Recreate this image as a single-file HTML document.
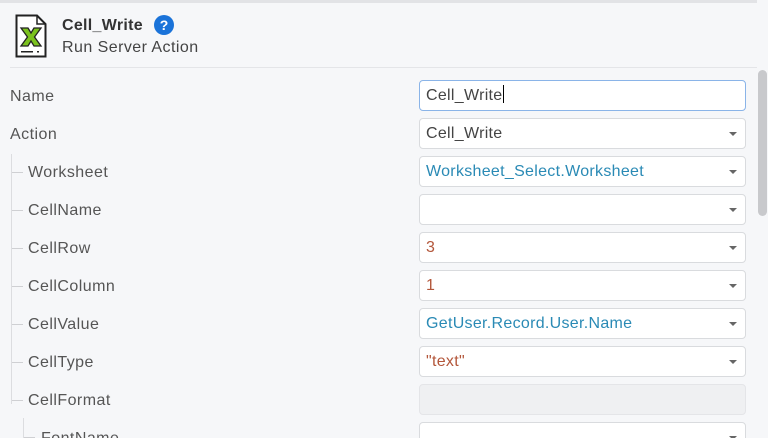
<!DOCTYPE html>
<html><head><style>
*{margin:0;padding:0;box-sizing:border-box}
html,body{width:768px;height:438px;overflow:hidden}
body{background:#f6f7f9;font-family:"Liberation Sans",sans-serif;position:relative;color:#555}
.abs{position:absolute}
.f{position:absolute;left:419px;width:327px;height:31px;background:#fff;border:1px solid #d9dbde;border-radius:4px;font-size:16px;letter-spacing:0.3px;line-height:30px;padding-left:6px;color:#444}
.f .ar{position:absolute;right:8px;top:13px;width:0;height:0;border-left:4px solid transparent;border-right:4px solid transparent;border-top:4px solid #666}
.l{position:absolute;font-size:16px;letter-spacing:0.45px;color:#555;margin-top:1px}
.blue{color:#2a8ab5}.red{color:#b3563a}
.v{position:absolute;left:11px;width:1px;background:#dcdde0}
.t{position:absolute;left:12px;width:11px;height:1px;background:#cfd0d3}
</style></head><body>
<div class="abs" style="left:0;top:0;width:757px;height:3px;background:#e2e3e6"></div>
<div class="abs" style="left:10px;top:67px;width:747px;height:1px;background:#e4e5e8"></div>
<div class="abs" style="left:758px;top:70px;width:9px;height:146px;background:#c8c9cc;border-radius:5px"></div>
<svg class="abs" style="left:15px;top:14px" width="32" height="44" viewBox="0 0 32 44">
<path d="M1.5 1.5H22L30.5 10V42.5H1.5Z" fill="#fff" stroke="#222" stroke-width="2"/>
<path d="M22 1.5V10H30.5" fill="none" stroke="#222" stroke-width="1.5"/>
<path d="M6 14h7l3 5 3-5h7l-6.5 9 6.5 9h-7l-3-5-3 5H6l6.5-9Z" fill="#7bc21e" stroke="#222" stroke-width="1.3"/>
<rect x="6" y="37" width="12" height="1.5" fill="#222"/><rect x="22" y="37" width="2" height="1.5" fill="#222"/>
</svg>
<div class="l" style="left:62px;top:16px;font-weight:bold;color:#333;letter-spacing:0.3px">Cell_Write</div>
<div class="abs" style="left:154px;top:15px;width:20px;height:20px;border-radius:50%;background:#1a73d9;color:#fff;font-weight:bold;font-size:14px;text-align:center;line-height:20px">?</div>
<div class="l" style="left:62px;top:38px;color:#444">Run Server Action</div>

<div class="l" style="left:10px;top:87px">Name</div>
<div class="f" style="top:80px;border-color:#8ab4e8">Cell_Write<span style="display:inline-block;width:1px;height:18px;background:#000;vertical-align:-3px"></span></div>
<div class="l" style="left:10px;top:125px">Action</div>
<div class="f" style="top:118px">Cell_Write<i class="ar"></i></div>

<div class="v" style="top:154px;height:250px"></div>
<div class="t" style="top:172px"></div><div class="l" style="left:28px;top:163px">Worksheet</div>
<div class="f blue" style="top:156px">Worksheet_Select.Worksheet<i class="ar"></i></div>
<div class="t" style="top:210px"></div><div class="l" style="left:28px;top:201px">CellName</div>
<div class="f" style="top:194px"><i class="ar"></i></div>
<div class="t" style="top:248px"></div><div class="l" style="left:28px;top:239px">CellRow</div>
<div class="f red" style="top:232px">3<i class="ar"></i></div>
<div class="t" style="top:286px"></div><div class="l" style="left:28px;top:277px">CellColumn</div>
<div class="f red" style="top:270px">1<i class="ar"></i></div>
<div class="t" style="top:324px"></div><div class="l" style="left:28px;top:315px">CellValue</div>
<div class="f blue" style="top:308px">GetUser.Record.User.Name<i class="ar"></i></div>
<div class="t" style="top:362px"></div><div class="l" style="left:28px;top:353px">CellType</div>
<div class="f red" style="top:346px">"text"<i class="ar"></i></div>
<div class="t" style="top:400px"></div><div class="l" style="left:28px;top:391px">CellFormat</div>
<div class="f" style="top:384px;background:#eff0f2;border-color:#e4e5e8"></div>
<div class="v" style="left:23px;top:418px;height:20px"></div>
<div class="t" style="left:24px;top:437px"></div><div class="l" style="left:41px;top:429px">FontName</div>
<div class="f" style="top:422px"><i class="ar"></i></div>
</body></html>
